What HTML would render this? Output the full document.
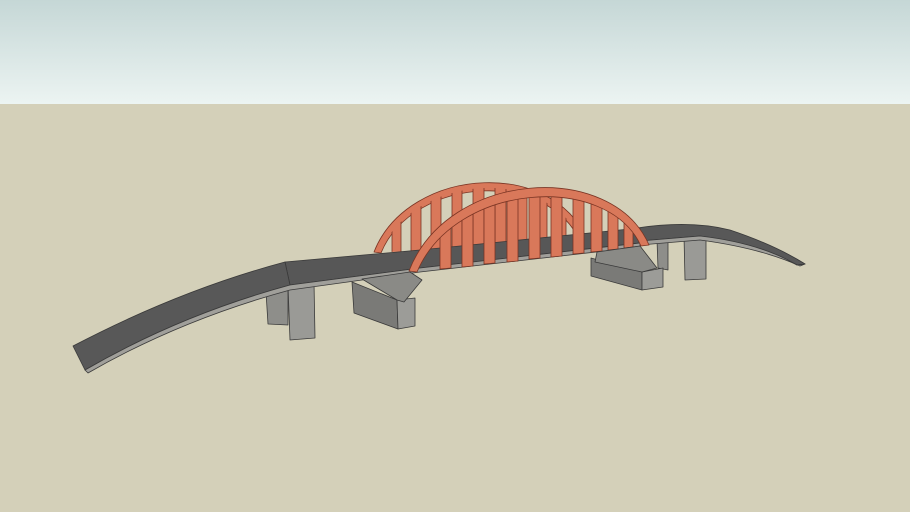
<!DOCTYPE html>
<html><head><meta charset="utf-8"><style>
html,body{margin:0;padding:0;width:910px;height:512px;overflow:hidden;background:#d4d0b9}
svg{display:block}
</style></head><body>
<svg width="910" height="512" viewBox="0 0 910 512" xmlns="http://www.w3.org/2000/svg">
<defs>
<linearGradient id="sky" x1="0" y1="0" x2="0" y2="1">
<stop offset="0" stop-color="#c5d7d6"/><stop offset="1" stop-color="#ecf4f2"/>
</linearGradient>
<clipPath id="cb"><path d="M380 252 C414 172 556 162 585 250 Z"/></clipPath>
<clipPath id="cf"><path d="M415 270 C454 178 606 168 643 245 L643 252 L415 280 Z"/></clipPath>
</defs>
<rect x="0" y="0" width="910" height="104" fill="url(#sky)"/>
<rect x="0" y="104" width="910" height="408" fill="#d4d0b9"/>

<g stroke="#3a3a3a" stroke-width="0.8" stroke-linejoin="round">
<path d="M266 292 L288 288 L288 325 L268 324 Z" fill="#8e8e8a"/>
<path d="M288 286 L314 282 L315 338 L290 340 Z" fill="#9a9a96"/>
<path d="M657 240 L668 239 L668 270 L658 268 Z" fill="#8e8e8a"/>
<path d="M684 236 L706 234 L706 279 L685 280 Z" fill="#9a9a96"/>

<path d="M700 236 Q760 240 800 263 L805 264 Q770 242 720 232 Z" fill="#4a4a4a"/>
<path d="M637 228 Q690 220 730 230 Q775 245 805 264 L797 265 Q760 245 700 236 L640 241 Z" fill="#585858"/>
<path d="M640 241 L700 236 Q760 243 797 265 L805 264 L800 266 Q760 248 700 240 L640 245 Z" fill="#a09f9a"/>

<path d="M374 252 C408 165 562 155 591 250 L584 251 C557 166 413 175 381 253 Z" fill="#d9785a" stroke="#7a3423"/>
<g fill="#d9785a" stroke="#7a3423" clip-path="url(#cb)">
<rect x="392" y="170" width="9" height="90"/>
<rect x="411" y="170" width="10" height="90"/>
<rect x="431" y="170" width="10" height="90"/>
<rect x="452" y="170" width="10" height="90"/>
<rect x="473" y="170" width="11" height="90"/>
<rect x="495" y="170" width="11" height="90"/>
<rect x="517" y="170" width="10" height="90"/>
<rect x="538" y="170" width="9" height="90"/>
<rect x="558" y="170" width="8" height="90"/>
</g>
<path d="M285 262 L420 250 L640 228 L640 243 L420 268 L290 285 Z" fill="#575757"/>
<path d="M73 346 Q180 290 285 262 L290 285 Q180 315 85 370 Z" fill="#585858"/>
<path d="M85 370 Q180 315 290 285 L420 268 L640 243 L640 247 L420 272 L290 290 Q180 320 88 373 Z" fill="#a09f9a"/>

<g fill="#d9785a" stroke="#7a3423" clip-path="url(#cf)">
<path d="M440 170 L451 170 L451 268 L440 269 Z"/>
<path d="M462 170 L473 170 L473 266 L462 267 Z"/>
<path d="M484 170 L495 170 L495 263 L484 264 Z"/>
<path d="M507 170 L518 170 L518 261 L507 262 Z"/>
<path d="M529 170 L540 170 L540 258 L529 259 Z"/>
<path d="M551 170 L562 170 L562 256 L551 257 Z"/>
<path d="M573 170 L584 170 L584 253 L573 254 Z"/>
<path d="M591 170 L602 170 L602 251 L591 252 Z"/>
<path d="M608 170 L618 170 L618 249 L608 250 Z"/>
<path d="M624 170 L633 170 L633 247 L624 248 Z"/>
</g>
<path d="M409 271 C448 170 612 160 649 245 L641 246 C607 172 455 182 417 272 Z" fill="#d9785a" stroke="#7a3423"/>

<path d="M352 282 L397 300 L398 329 L354 313 Z" fill="#7a7a77"/>
<path d="M397 300 L415 298 L415 326 L398 329 Z" fill="#9c9c98"/>
<path d="M362 279 L410 272 L422 280 L404 302 L397 300 Z" fill="#8a8a86"/>
<path d="M591 258 L642 272 L642 290 L591 276 Z" fill="#7a7a77"/>
<path d="M642 272 L663 268 L663 287 L642 290 Z" fill="#9c9c98"/>
<path d="M597 252 L640 246 L657 268 L642 272 L595 262 Z" fill="#8a8a86"/>
</g>
</svg>
</body></html>
